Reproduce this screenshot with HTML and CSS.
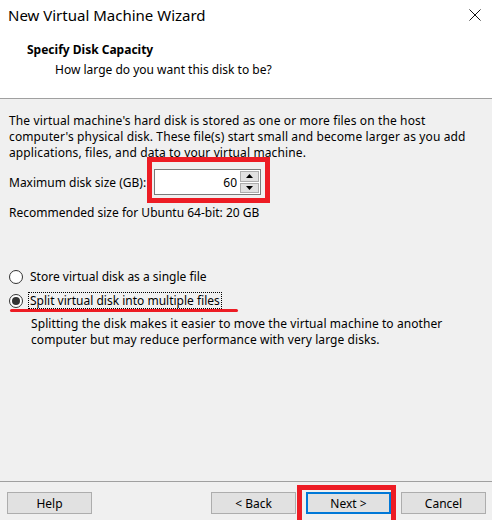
FILE: index.html
```html
<!DOCTYPE html>
<html lang="en">
<head>
  <meta charset="UTF-8" />
  <meta name="viewport" content="width=device-width, initial-scale=1.0"/>
  <title>New Virtual Machine Wizard</title>
  <link rel="stylesheet" href="styles.css">
</head>
<body>
  <div class="window">
    <header class="head">
      <div class="titlebar">
        <span class="title">New Virtual Machine Wizard</span>
        <svg class="close" width="12" height="12" viewBox="0 0 12 12">
          <path d="M0.5 0.5 L11.5 11.5 M11.5 0.5 L0.5 11.5" stroke="#111" stroke-width="1" fill="none"/>
        </svg>
      </div>
      <div class="step">
        <h1>Specify Disk Capacity</h1>
        <p>How large do you want this disk to be?</p>
      </div>
    </header>

    <main class="content">
      <p class="intro">
        The virtual machine's hard disk is stored as one or more files on the host<br>
        computer's physical disk. These file(s) start small and become larger as you add<br>
        applications, files, and data to your virtual machine.
      </p>

      <div class="size-row">
        <label class="size-label" for="diskSize">Maximum disk size (GB):</label>
        <div class="spin marked">
          <input id="diskSize" class="spin-input" type="text" value="60">
          <div class="spin-arrows">
            <span class="arrow">
              <svg width="7" height="4" viewBox="0 0 7 4"><path d="M0 4 L3.5 0 L7 4 Z" fill="#000"/></svg>
            </span>
            <span class="arrow">
              <svg width="7" height="4" viewBox="0 0 7 4"><path d="M0 0 L3.5 4 L7 0 Z" fill="#000"/></svg>
            </span>
          </div>
        </div>
      </div>

      <p class="hint">Recommended size for Ubuntu 64-bit: 20 GB</p>

      <div class="options">
        <label class="radio">
          <span class="dot"></span>
          <span class="radio-text">Store virtual disk as a single file</span>
        </label>
        <label class="radio checked underlined">
          <span class="dot"></span>
          <span class="radio-text focus">Split virtual disk into multiple files</span>
        </label>
        <p class="note">
          Splitting the disk makes it easier to move the virtual machine to another<br>
          computer but may reduce performance with very large disks.
        </p>
      </div>
    </main>

    <footer class="foot">
      <button class="btn">Help</button>
      <div class="nav">
        <button class="btn">&lt; Back</button>
        <button class="btn default marked">Next &gt;</button>
        <button class="btn">Cancel</button>
      </div>
    </footer>
  </div>
</body>
</html>
```

FILE: styles.css
```css
:root {
  --face: #f0f0f0;
  --line: #a0a0a0;
  --btn-face: #e1e1e1;
  --btn-border: #adadad;
  --accent: #0078d7;
  --mark: #ed1c24;
  --font: "Noto Sans", "Open Sans", sans-serif;
}

* {
  box-sizing: border-box;
}

html, body {
  margin: 0;
  padding: 0;
  height: 100%;
  overflow: hidden;
  background: var(--face);
  font-family: var(--font);
  font-size: 12px;
  color: #000;
}

p {
  margin: 0;
}

.window {
  display: flex;
  flex-direction: column;
  height: 520px;
}

/* white banner with title bar and step heading */
.head {
  background: #fff;
  height: 99px;
  border-bottom: 1px solid var(--line);
}

.titlebar {
  display: flex;
  justify-content: space-between;
  align-items: center;
  height: 31px;
  padding: 0 11px 1px 8px;
}

.title {
  font-size: 15px;
  color: #000;
}

.step {
  padding: 11px 0 0 27px;
}

.step h1 {
  margin: 0;
  font-size: 12px;
  font-weight: 700;
  line-height: 16px;
}

.step p {
  padding: 4px 0 0 28px;
  line-height: 16px;
}

/* main panel */
.content {
  flex: 1;
  padding: 14px 9px 0 9px;
}

.intro {
  line-height: 16px;
  letter-spacing: 0.12px;
  white-space: nowrap;
}

.size-row {
  display: flex;
  align-items: center;
  margin-top: 8px;
  height: 26px;
}

.size-label {
  width: 145px;
}

.spin {
  display: flex;
  width: 107px;
  height: 26px;
  border: 1px solid #7a7a7a;
  background: #fff;
}

.spin-input {
  flex: 1;
  min-width: 0;
  border: none;
  outline: none;
  padding: 0 3px 0 0;
  text-align: right;
  font-family: var(--font);
  font-size: 12px;
  background: transparent;
}

.spin-arrows {
  display: flex;
  flex-direction: column;
  gap: 1px;
  width: 20px;
  padding: 1px 1px 1px 0;
}

.arrow {
  flex: 1;
  display: flex;
  align-items: center;
  justify-content: center;
  background: var(--btn-face);
  border: 1px solid var(--btn-border);
}

/* red annotation frames */
.marked {
  position: relative;
}

.marked::after {
  content: "";
  position: absolute;
  border: 5px solid var(--mark);
  pointer-events: none;
}

.spin.marked::after {
  left: -8px;
  top: -13px;
  right: -10px;
  bottom: -9px;
}

.hint {
  margin-top: 10px;
  line-height: 16px;
}

.options {
  margin-top: 47px;
}

.radio {
  display: flex;
  align-items: center;
  height: 17px;
  gap: 5px;
}

.radio + .radio {
  margin-top: 7px;
}

.dot {
  width: 14px;
  height: 14px;
  border: 1px solid #333;
  border-radius: 50%;
  background: #fff;
  display: flex;
  align-items: center;
  justify-content: center;
}

.checked .dot::before {
  content: "";
  width: 8px;
  height: 8px;
  border-radius: 50%;
  background: #333;
}

.radio-text {
  line-height: 15px;
  padding: 0 1px;
  border: 1px solid transparent;
}

.focus {
  border: 1px dotted #000;
}

.underlined {
  position: relative;
}

.underlined::after {
  content: "";
  position: absolute;
  left: 1px;
  top: 17px;
  width: 228px;
  height: 3px;
  border-radius: 2px;
  background: var(--mark);
}

.note {
  margin-top: 7px;
  padding-left: 22px;
  line-height: 16px;
  letter-spacing: 0.08px;
  white-space: nowrap;
}

/* button strip */
.foot {
  display: flex;
  justify-content: space-between;
  height: 39px;
  border-top: 1px solid var(--line);
  padding: 10px 6px 0 7px;
}

.nav {
  display: flex;
  gap: 10px;
}

.btn {
  width: 85px;
  height: 22px;
  padding: 0;
  background: var(--btn-face);
  border: 1px solid var(--btn-border);
  font-family: var(--font);
  font-size: 12px;
  color: #000;
}

.btn.default {
  border: 2px solid var(--accent);
}

.btn.marked::after {
  left: -11px;
  top: -9px;
  right: -7px;
  bottom: -13px;
}
```
